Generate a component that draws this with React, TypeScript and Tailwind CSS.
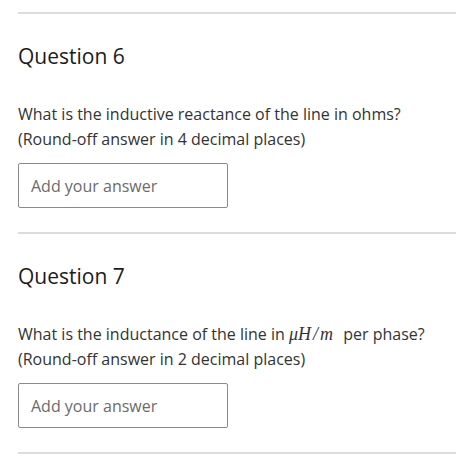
const questions = [
  {
    n: 6,
    body: <>What is the inductive reactance of the line in ohms?</>,
    note: '(Round-off answer in 4 decimal places)',
  },
  {
    n: 7,
    body: (
      <>
        What is the inductance of the line in{' '}
        <span className="italic text-[18px] mr-[6px]" style={{ fontFamily: '"Liberation Serif", serif' }}>
          μH<span className="mx-[2px]">/</span>m
        </span>{' '}
        per phase?
      </>
    ),
    note: '(Round-off answer in 2 decimal places)',
  },
];

export default function App() {
  return (
    <div
      className="w-[474px] h-[459px] bg-white overflow-hidden px-[18px] pt-[12px]"
      style={{ fontFamily: '"Open Sans", sans-serif' }}
    >
      {questions.map((q) => (
        <section key={q.n}>
          <div className="h-[2px] bg-[#dcdcdc]" />
          <h2 className="mt-[28px] text-[21px] leading-[28px] text-[#1c1c1c]">Question {q.n}</h2>
          <p className="mt-[32px] text-[16px] leading-[25px] text-[#333333]">
            {q.body}
            <br />
            {q.note}
          </p>
          <div className="mt-[11px] mb-[24px] w-[210px] h-[45px] border border-[#8a8a8a] rounded-[2px] flex items-center px-[12px]">
            <span className="text-[16px] text-[#6b6b6b]">Add your answer</span>
          </div>
        </section>
      ))}
      <div className="h-[2px] bg-[#dcdcdc]" />
    </div>
  );
}
